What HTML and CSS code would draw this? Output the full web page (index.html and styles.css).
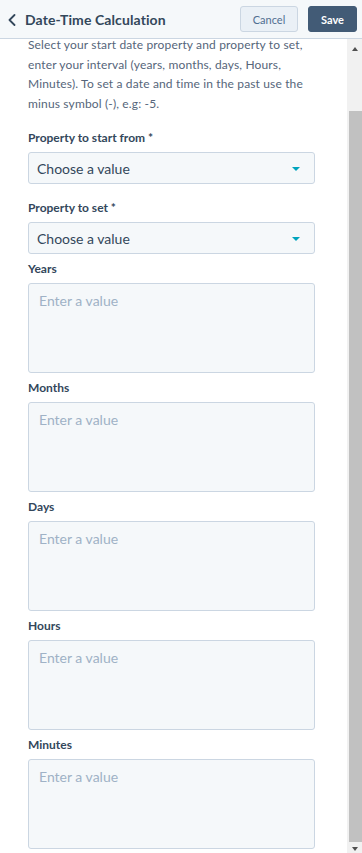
FILE: index.html
```html
<!DOCTYPE html>
<html lang="en">
<head>
<meta charset="utf-8">
<title>Date-Time Calculation</title>
<link rel="stylesheet" href="styles.css">
</head>
<body>
<div class="panel">
  <header class="header">
    <div class="header-left">
      <svg class="back" width="8" height="12" viewBox="0 0 8 12"><path d="M6.5 1 L1.5 6 L6.5 11" fill="none" stroke="#33475b" stroke-width="1.8" stroke-linecap="round" stroke-linejoin="round"/></svg>
      <h1 class="title">Date-Time Calculation</h1>
    </div>
    <div class="actions">
      <button class="btn btn-cancel">Cancel</button>
      <button class="btn btn-save">Save</button>
    </div>
  </header>
  <div class="body">
    <main class="content">
      <p class="desc">Select your start date property and property to set, enter your interval (years, months, days, Hours, Minutes). To set a date and time in the past use the minus symbol (-), e.g: -5.</p>

      <div class="field field-wide">
        <label class="label">Property to start from *</label>
        <div class="select"><span>Choose a value</span><span class="caret"></span></div>
      </div>
      <div class="field">
        <label class="label">Property to set *</label>
        <div class="select"><span>Choose a value</span><span class="caret"></span></div>
      </div>
      <div class="field">
        <label class="label">Years</label>
        <div class="textarea">Enter a value</div>
      </div>
      <div class="field">
        <label class="label">Months</label>
        <div class="textarea">Enter a value</div>
      </div>
      <div class="field">
        <label class="label">Days</label>
        <div class="textarea">Enter a value</div>
      </div>
      <div class="field">
        <label class="label">Hours</label>
        <div class="textarea">Enter a value</div>
      </div>
      <div class="field">
        <label class="label">Minutes</label>
        <div class="textarea">Enter a value</div>
      </div>
    </main>
    <div class="scrollbar">
      <div class="sb-btn"><span class="sb-up"></span></div>
      <div class="sb-thumb"></div>
      <div class="sb-btn-bottom"><span class="sb-down"></span></div>
    </div>
  </div>
</div>
</body>
</html>
```

FILE: styles.css
```css
* { box-sizing: border-box; }
html, body {
  margin: 0;
  padding: 0;
  background: #ffffff;
  font-family: "Lato", "Noto Sans", sans-serif;
  color: #33475b;
}
.panel {
  width: 362px;
  height: 853px;
  display: flex;
  flex-direction: column;
  overflow: hidden;
}
.header {
  position: relative;
  z-index: 2;
  height: 39px;
  flex: none;
  background: #f5f8fa;
  border-bottom: 1px solid #cbd6e2;
  display: flex;
  align-items: center;
  justify-content: space-between;
  padding: 0 5px 0 8px;
}
.header-left {
  display: flex;
  align-items: center;
  gap: 9px;
}
.back { display: block; margin-top: 1px; }
.title {
  margin: 0;
  font-size: 14px;
  font-weight: 700;
  color: #33475b;
  letter-spacing: 0.1px;
}
.actions {
  display: flex;
  gap: 10px;
  align-items: center;
}
.btn {
  height: 26px;
  border-radius: 3px;
  font-family: "Lato", "Noto Sans", sans-serif;
  font-size: 11px;
  padding: 0;
  cursor: pointer;
}
.btn-cancel {
  width: 58px;
  background: #eaf0f6;
  border: 1px solid #cbd6e2;
  color: #506e91;
}
.btn-save {
  width: 49px;
  background: #425b76;
  border: 1px solid #425b76;
  color: #ffffff;
  font-weight: 700;
}
.body {
  flex: 1;
  display: flex;
  min-height: 0;
}
.content {
  width: 347px;
  flex: none;
  padding: 0 32px 0 28px;
  overflow: hidden;
}
.desc {
  margin: -4px 0 17px;
  font-size: 12px;
  line-height: 19.5px;
  letter-spacing: 0.15px;
  color: #55657a;
}
.field {
  display: flex;
  flex-direction: column;
  gap: 6px;
  margin-bottom: 7px;
}
.field-wide { margin-bottom: 16px; }
.label {
  font-size: 12px;
  line-height: 16px;
  font-weight: 700;
  color: #33475b;
}
.select {
  height: 32px;
  background: #f5f8fa;
  border: 1px solid #cbd6e2;
  border-radius: 3px;
  display: flex;
  align-items: center;
  justify-content: space-between;
  padding: 0 14px 0 8px;
  font-size: 14px;
  color: #33475b;
}
.caret {
  width: 0;
  height: 0;
  border-left: 4px solid transparent;
  border-right: 4px solid transparent;
  border-top: 4px solid #00a4bd;
  margin-top: 1px;
}
.textarea {
  height: 90px;
  background: #f5f8fa;
  border: 1px solid #cbd6e2;
  border-radius: 3px;
  padding: 6px 10px;
  font-size: 14px;
  line-height: 22px;
  color: #9fb2c6;
}
.scrollbar {
  width: 15px;
  flex: none;
  background: #f1f1f1;
  display: flex;
  flex-direction: column;
}
.sb-btn {
  height: 72px;
  display: flex;
  justify-content: center;
  padding-top: 8px;
}
.sb-up {
  width: 0; height: 0;
  border-left: 3.5px solid transparent;
  border-right: 3.5px solid transparent;
  border-bottom: 4px solid #505050;
}
.sb-thumb {
  height: 731px;
  margin-left: 2px;
  background: #c1c1c1;
}
.sb-btn-bottom {
  flex: 1;
  display: flex;
  justify-content: center;
  align-items: center;
}
.sb-down {
  width: 0; height: 0;
  border-left: 3.5px solid transparent;
  border-right: 3.5px solid transparent;
  border-top: 4px solid #505050;
  margin-top: 2px;
}
```
